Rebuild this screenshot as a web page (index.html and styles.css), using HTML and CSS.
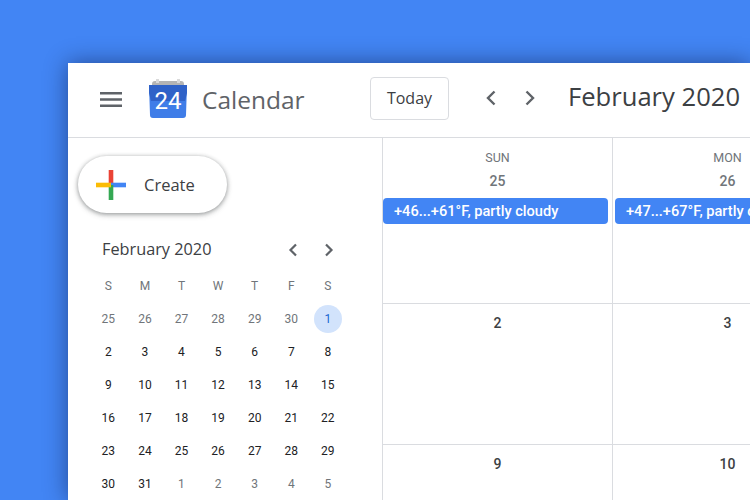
FILE: index.html
```html
<!DOCTYPE html>
<html lang="en">
<head>
    <meta charset="UTF-8">
    <meta name="viewport" content="width=device-width, initial-scale=1.0">
    <title>Calendar</title>
    <link rel="stylesheet" href="styles.css">
</head>
<body>

<div class="window">
    <header class="topbar">
        <svg class="menu-icon" width="22" height="15" viewBox="0 0 22 15">
            <path d="M0 1.200h22M0 7.500h22M0 13.800h22" stroke="#5f6368" stroke-width="2.400"/>
        </svg>
        <div class="logo">
            <svg class="logo-back" width="38" height="40" viewBox="0 0 38 40">
                <path d="M3 5a3 3 0 0 1 3-3h26a3 3 0 0 1 3 3v4H3z" fill="#b4b4b4"/>
                <rect x="7" y="0" width="3" height="4" fill="#dadada"/>
                <rect x="28" y="0" width="3" height="4" fill="#dadada"/>
                <path d="M0 6h38l-1 30a3 3 0 0 1-3 3H4a3 3 0 0 1-3-3z" fill="#3f7de8"/>
                <path d="M0 6h38v8l-2 8H2L0 14z" fill="#2f62c8"/>
            </svg>
            <span class="logo-num">24</span>
        </div>
        <span class="app-name">Calendar</span>
        <button class="today-btn">Today</button>
        <svg class="nav-prev" width="12" height="16" viewBox="0 0 12 16">
            <path d="M9.500 1.500 3 8l6.500 6.500" fill="none" stroke="#5f6368" stroke-width="2.400"/>
        </svg>
        <svg class="nav-next" width="12" height="16" viewBox="0 0 12 16">
            <path d="M2.500 1.500 9 8l-6.500 6.500" fill="none" stroke="#5f6368" stroke-width="2.400"/>
        </svg>
        <h1 class="current-month">February 2020</h1>
    </header>

    <div class="content">
        <aside class="sidebar">
            <button class="create-btn">
                <svg width="30" height="30" viewBox="0 0 30 30">
                    <rect x="12.700" y="0" width="4.600" height="15" fill="#ea4335"/>
                    <rect x="15" y="12.700" width="15" height="4.600" fill="#4285f4"/>
                    <rect x="12.700" y="15" width="4.600" height="15" fill="#34a853"/>
                    <rect x="0" y="12.700" width="15" height="4.600" fill="#fbbc05"/>
                </svg>
                <span>Create</span>
            </button>

            <div class="mini-head">
                <span class="mini-title">February 2020</span>
                <svg class="mini-prev" width="12" height="14" viewBox="0 0 12 14">
                    <path d="M9 1.500 3.500 7 9 12.500" fill="none" stroke="#5f6368" stroke-width="2.200"/>
                </svg>
                <svg class="mini-next" width="12" height="14" viewBox="0 0 12 14">
                    <path d="M3 1.500 8.500 7 3 12.500" fill="none" stroke="#5f6368" stroke-width="2.200"/>
                </svg>
            </div>

            <div class="mini-grid">
                <span class="dow">S</span><span class="dow">M</span><span class="dow">T</span><span class="dow">W</span><span class="dow">T</span><span class="dow">F</span><span class="dow">S</span>
                <span class="other">25</span><span class="other">26</span><span class="other">27</span><span class="other">28</span><span class="other">29</span><span class="other">30</span><span class="selected">1</span>
                <span>2</span><span>3</span><span>4</span><span>5</span><span>6</span><span>7</span><span>8</span>
                <span>9</span><span>10</span><span>11</span><span>12</span><span>13</span><span>14</span><span>15</span>
                <span>16</span><span>17</span><span>18</span><span>19</span><span>20</span><span>21</span><span>22</span>
                <span>23</span><span>24</span><span>25</span><span>26</span><span>27</span><span>28</span><span>29</span>
                <span>30</span><span>31</span><span class="other">1</span><span class="other">2</span><span class="other">3</span><span class="other">4</span><span class="other">5</span>
            </div>
        </aside>

        <main class="month">
            <div class="day first-row">
                <div class="dow-label">SUN</div>
                <div class="date muted">25</div>
                <div class="event">+46...+61°F, partly cloudy</div>
            </div>
            <div class="day first-row">
                <div class="dow-label">MON</div>
                <div class="date muted">26</div>
                <div class="event">+47...+67°F, partly cloudy</div>
            </div>
            <div class="day second-row"><div class="date">2</div></div>
            <div class="day second-row"><div class="date">3</div></div>
            <div class="day third-row"><div class="date">9</div></div>
            <div class="day third-row"><div class="date">10</div></div>
        </main>
    </div>
</div>

</body>
</html>
```

FILE: styles.css
```css
html, body {
    height: 100%;
}
body {
    margin: 0;
    background-color: #4285f4;
    overflow: hidden;
    font-family: Roboto, Arial, sans-serif;
}
.window {
    width: 682px;
    height: 437px;
    margin: 63px 0 0 68px;
    overflow: hidden;
    background-color: #fff;
    box-shadow: 0 0 22px rgba(0, 0, 30, 0.45);
}

/* top bar */
.topbar {
    display: flex;
    align-items: center;
    height: 74px;
    box-sizing: content-box;
    border-bottom: 1px solid #dadce0;
}
.menu-icon {
    margin: 0 27px 2px 32px;
}
.logo {
    position: relative;
    width: 38px;
    height: 40px;
    margin-top: -2px;
}
.logo-back {
    display: block;
}
.logo-num {
    position: absolute;
    left: 0;
    right: 0;
    top: 8px;
    text-align: center;
    color: #fff;
    font-size: 24px;
    line-height: 28px;
}
.app-name {
    margin: -2px 0 0 15px;
    width: 168px;
    font-family: "Open Sans", sans-serif;
    font-size: 24.500px;
    color: #5f6368;
}
.today-btn {
    width: 79px;
    height: 43px;
    margin-bottom: 4px;
    padding: 0;
    background: #fff;
    border: 1px solid #dadce0;
    border-radius: 4px;
    font-family: "Open Sans", sans-serif;
    font-size: 16px;
    font-weight: 500;
    color: #3c4043;
}
.nav-prev {
    margin: 0 0 5px 36px;
}
.nav-next {
    margin: 0 0 5px 27px;
}
.current-month {
    margin: 0 0 7px 32px;
    font-family: "Open Sans", sans-serif;
    font-size: 25.600px;
    font-weight: 400;
    color: #3c4043;
    white-space: nowrap;
}

/* page below the bar */
.content {
    display: flex;
}
.sidebar {
    flex: none;
    width: 314px;
    padding: 18px 0 0 10px;
    box-sizing: border-box;
}
.create-btn {
    display: flex;
    align-items: center;
    width: 149px;
    height: 57px;
    padding: 0 0 0 18px;
    background: #fff;
    border: 0;
    border-radius: 29px;
    box-shadow: 0 1px 4px rgba(60, 64, 67, 0.45), 0 2px 6px rgba(60, 64, 67, 0.2);
    font-family: "Open Sans", sans-serif;
    font-size: 16.500px;
    font-weight: 500;
    color: #3c4043;
}
.create-btn span {
    margin: -1px 0 0 18px;
}
.mini-head {
    display: flex;
    align-items: center;
    height: 24px;
    margin: 24px 0 0 24px;
}
.mini-title {
    width: 185px;
    font-family: "Open Sans", sans-serif;
    font-size: 16.300px;
    font-weight: 500;
    color: #3c4043;
    white-space: nowrap;
}
.mini-prev, .mini-next {
    margin-top: 2px;
}
.mini-next {
    margin-left: 24px;
}
.mini-grid {
    display: grid;
    grid-template-columns: repeat(7, 36.600px);
    grid-auto-rows: 33px;
    margin: 8px 0 0 12px;
    font-size: 12px;
    color: #202124;
    justify-items: center;
    align-items: center;
}
.mini-grid .dow, .mini-grid .other {
    color: #70757a;
}
.mini-grid .selected {
    display: flex;
    align-items: center;
    justify-content: center;
    width: 28px;
    height: 28px;
    border-radius: 50%;
    background-color: #d2e3fc;
    color: #1967d2;
}

/* month grid */
.month {
    flex: 1;
    display: grid;
    grid-template-columns: 230px 1fr;
    grid-template-rows: 166px 141px 56px;
}
.day {
    border-left: 1px solid #dadce0;
    border-bottom: 1px solid #dadce0;
    text-align: center;
    box-sizing: border-box;
    min-width: 0;
}
.day:nth-child(even) .date, .day:nth-child(even) .dow-label {
    width: 229px;
}
.first-row {
    padding-top: 13px;
}
.second-row, .third-row {
    padding-top: 9px;
}
.third-row {
    border-bottom: 0;
}
.dow-label {
    font-size: 12.500px;
    line-height: 14px;
    color: #70757a;
}
.first-row .date {
    margin-top: 6px;
}
.date {
    font-size: 14px;
    font-weight: 500;
    line-height: 20px;
    color: #3c4043;
}
.date.muted {
    color: #70757a;
}
.event {
    width: 225px;
    height: 26px;
    margin-top: 7px;
    padding-left: 11px;
    box-sizing: border-box;
    overflow: hidden;
    white-space: nowrap;
    text-align: left;
    background-color: #4285f4;
    border-radius: 4px;
    font-size: 14.600px;
    font-weight: 500;
    line-height: 26px;
    color: #fff;
}
.day:nth-child(2) .event {
    margin-left: 2px;
    width: 135px;
    border-radius: 4px 0 0 4px;
}
```
